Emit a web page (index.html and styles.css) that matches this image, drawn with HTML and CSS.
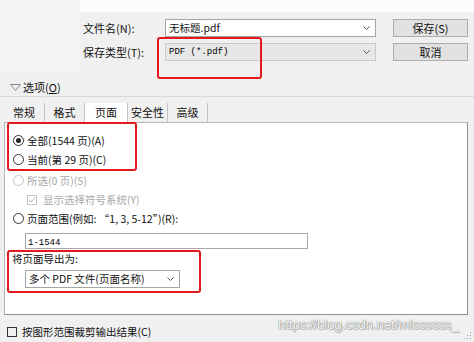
FILE: index.html
```html
<!DOCTYPE html>
<html lang="zh-CN">
<head>
  <meta charset="UTF-8" />
  <title>另存为 PDF</title>
  <link rel="stylesheet" href="styles.css">
</head>
<body>
  <div class="dialog">
    <div class="top">
      <div class="side"></div>
      <div class="main">
        <div class="strip"></div>
        <div class="form">
          <label class="lbl">文件名(N):</label>
          <div class="combo">
            <span>无标题.pdf</span>
            <svg class="chev" width="7" height="4" viewBox="0 0 7 4"><path d="M0.5 0.5 L3.5 3.5 L6.5 0.5" fill="none" stroke="#555" stroke-width="1"/></svg>
          </div>
          <button class="btn">保存(S)</button>

          <label class="lbl">保存类型(T):</label>
          <div class="combo gray">
            <span class="mono">PDF (*.pdf)</span>
            <svg class="chev" width="7" height="4" viewBox="0 0 7 4"><path d="M0.5 0.5 L3.5 3.5 L6.5 0.5" fill="none" stroke="#555" stroke-width="1"/></svg>
          </div>
          <button class="btn">取消</button>
        </div>
      </div>
    </div>

    <div class="options">
      <svg width="11" height="7" viewBox="0 0 11 7"><path d="M0.5 0.5 L10.5 0.5 L5.5 6.5 Z" fill="none" stroke="#8a8a8a" stroke-width="1"/></svg>
      <span>选项(<u>O</u>)</span>
    </div>

    <div class="tabs">
      <div class="tab w41">常规</div>
      <div class="tab">格式</div>
      <div class="tab active">页面</div>
      <div class="tab">安全性</div>
      <div class="tab">高级</div>
    </div>

    <div class="panel">
      <div class="row">
        <span class="radio on"></span>
        <span>全部(1544 页)(A)</span>
      </div>
      <div class="row">
        <span class="radio"></span>
        <span>当前(第 29 页)(C)</span>
      </div>
      <div class="row disabled gap2">
        <span class="radio"></span>
        <span>所选(0 页)(S)</span>
      </div>
      <div class="row disabled sub">
        <span class="check">
          <svg width="8" height="8" viewBox="0 0 8 8"><path d="M1 4 L3 6 L7 1.5" fill="none" stroke="#b4b4b4" stroke-width="1"/></svg>
        </span>
        <span>显示选择符号系统(Y)</span>
      </div>
      <div class="row">
        <span class="radio"></span>
        <span>页面范围(例如: “1, 3, 5-12”)(R):</span>
      </div>
      <div class="field"><span class="mono">1-1544</span></div>
      <div class="export-label">将页面导出为:</div>
      <div class="combo export">
        <span>多个 PDF 文件(页面名称)</span>
        <svg class="chev" width="7" height="4" viewBox="0 0 7 4"><path d="M0.5 0.5 L3.5 3.5 L6.5 0.5" fill="none" stroke="#555" stroke-width="1"/></svg>
      </div>
    </div>

    <div class="footer">
      <span class="check"></span>
      <span>按图形范围裁剪输出结果(C)</span>
    </div>

    <!-- 标注框 -->
    <div class="mark m1"></div>
    <div class="mark m2"></div>
    <div class="mark m3"></div>

    <div class="watermark">https://blog.csdn.net/missssss_</div>
    <svg class="grip" width="8" height="8" viewBox="0 0 8 8">
      <rect x="6" y="0" width="1" height="1" fill="#9a9a9a"/>
      <rect x="3" y="3" width="1" height="1" fill="#9a9a9a"/>
      <rect x="6" y="3" width="1" height="1" fill="#9a9a9a"/>
      <rect x="0" y="6" width="1" height="1" fill="#9a9a9a"/>
      <rect x="3" y="6" width="1" height="1" fill="#9a9a9a"/>
      <rect x="6" y="6" width="1" height="1" fill="#9a9a9a"/>
    </svg>
  </div>
</body>
</html>
```

FILE: styles.css
```css
* {
  margin: 0;
  padding: 0;
  box-sizing: border-box;
}

body {
  width: 474px;
  height: 342px;
  overflow: hidden;
  background: #f0f0f0;
  font-family: "Noto Sans CJK SC", sans-serif;
  font-size: 10.5px;
  color: #111;
}

.dialog {
  position: relative;
  height: 342px;
}

.mono {
  font-family: "Liberation Mono", "Noto Sans CJK SC", monospace;
  font-size: 9px;
  color: #000;
}

/* 顶部：文件名 / 类型 */
.top {
  display: flex;
  height: 72px;
}

.side {
  width: 80px;
  height: 72px;
  background: #f3f3f3;
}

.main {
  flex: 1;
}

.strip {
  height: 12px;
  background: #fcfcfc;
}

.form {
  display: grid;
  grid-template-columns: 82px 228px 75px;
  grid-auto-rows: 18px;
  row-gap: 6px;
  margin-top: 7px;
  margin-left: 3px;
}

.lbl {
  line-height: 18px;
  font-size: 11px;
}

.combo {
  width: 211px;
  height: 18px;
  display: flex;
  align-items: center;
  justify-content: space-between;
  padding: 0 5px 0 3px;
  background: #fff;
  border: 1px solid #a5a5a5;
  line-height: 16px;
}

.combo.gray {
  background: #e7e7e7;
  border-color: #c9c9c9;
}

.btn {
  width: 75px;
  height: 18px;
  justify-self: end;
  background: #e1e1e1;
  border: 1px solid #adadad;
  font-family: inherit;
  font-size: 11px;
  color: #111;
  line-height: 16px;
}

/* 选项 */
.options {
  height: 25px;
  padding: 6px 0 0 10px;
  display: flex;
  align-items: center;
  gap: 2px;
  line-height: 18px;
  font-size: 11px;
  border-bottom: 1px solid #d9d9d9;
}

.options svg {
  margin-top: 1px;
}

/* 标签页 */
.tabs {
  display: flex;
  margin: 6px 0 0 4px;
  height: 19px;
  font-size: 11px;
}

.tab {
  width: 40px;
  text-align: center;
  line-height: 19px;
  border-right: 1px solid #c4c4c4;
}

.tab.w41 {
  width: 41px;
}

.tab.active {
  width: 43px;
  background: #fff;
}

.panel {
  width: 464px;
  height: 193px;
  margin-left: 4px;
  background: #fff;
  border: 1px solid #b4b4b4;
  border-right-color: #8f8f8f;
  border-bottom-color: #8f8f8f;
  padding: 8px 0 0 8px;
}

.row {
  display: flex;
  align-items: center;
  gap: 3px;
  height: 19px;
}

.row.gap2 {
  margin-top: 2px;
}

.row.sub {
  padding-left: 14px;
  gap: 6px;
}

.row.disabled {
  color: #a8a8a8;
}

.radio {
  flex: none;
  width: 11px;
  height: 11px;
  border: 1px solid #333;
  border-radius: 50%;
  display: flex;
  align-items: center;
  justify-content: center;
}

.radio.on::after {
  content: "";
  width: 5px;
  height: 5px;
  border-radius: 50%;
  background: #222;
}

.disabled .radio {
  border-color: #c4c4c4;
}

.check {
  flex: none;
  width: 10px;
  height: 10px;
  border: 1px solid #333;
  display: flex;
  align-items: center;
  justify-content: center;
}

.disabled .check {
  border-color: #c4c4c4;
}

.field {
  width: 283px;
  height: 16px;
  margin: 5px 0 0 12px;
  border: 1px solid #a8a8a8;
  padding-left: 2px;
  line-height: 14px;
}

.export-label {
  margin: 1px 0 0 -1px;
  line-height: 18px;
}

.combo.export {
  width: 155px;
  margin: 2px 0 0 12px;
}

/* 底部 */
.footer {
  display: flex;
  align-items: center;
  gap: 5px;
  height: 27px;
  padding: 6px 0 0 7px;
}

/* 红色标注 */
.mark {
  position: absolute;
  border: 2px solid #e3191f;
  border-radius: 3px;
}

.m1 {
  left: 157px;
  top: 37px;
  width: 105px;
  height: 42px;
}

.m2 {
  left: 7px;
  top: 122px;
  width: 130px;
  height: 49px;
}

.m3 {
  left: 7px;
  top: 250px;
  width: 194px;
  height: 43px;
}

.watermark {
  position: absolute;
  left: 278px;
  top: 317px;
  font-family: "Liberation Sans", sans-serif;
  font-size: 13.5px;
  line-height: 16px;
  letter-spacing: -0.2px;
  color: #f8f8f8;
  text-shadow: 0 0 1px #7a7a7a, 0 0 1px #9a9a9a, 1px 1px 1px rgba(0,0,0,0.25);
}

.grip {
  position: absolute;
  right: 2px;
  bottom: 2px;
}
```
